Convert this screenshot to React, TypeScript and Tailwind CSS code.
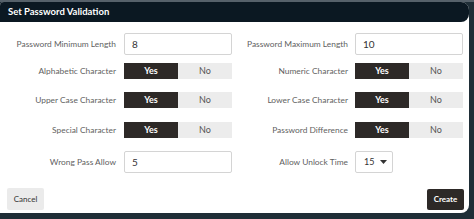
import React, { useState } from 'react';

type Toggle = 'yes' | 'no';

function YesNo({ value, onChange }: { value: Toggle; onChange: (v: Toggle) => void }) {
  return (
    <div className="flex h-[16px] w-[108px] text-[9px]">
      <button
        onClick={() => onChange('yes')}
        className={
          value === 'yes'
            ? 'flex-1 bg-[#2d2927] font-bold text-white'
            : 'flex-1 bg-[#ececec] text-[#555]'
        }
      >
        Yes
      </button>
      <button
        onClick={() => onChange('no')}
        className={
          value === 'no'
            ? 'flex-1 bg-[#2d2927] font-bold text-white'
            : 'flex-1 bg-[#ececec] text-[#555]'
        }
      >
        No
      </button>
    </div>
  );
}

function Label({ children }: { children: React.ReactNode }) {
  return <div className="w-[116px] shrink-0 text-right text-[8.4px] text-[#5f5f5f]">{children}</div>;
}

function TextBox({ value }: { value: string }) {
  return (
    <input
      defaultValue={value}
      className="h-[22px] w-[108px] rounded-[2px] border border-[#d4d4d4] bg-white px-[7px] text-[10px] text-[#333] outline-none"
    />
  );
}

export default function App() {
  const [toggles, setToggles] = useState<Record<string, Toggle>>({
    alpha: 'yes',
    numeric: 'yes',
    upper: 'yes',
    lower: 'yes',
    special: 'yes',
    diff: 'yes',
  });
  const set = (k: string) => (v: Toggle) => setToggles((p) => ({ ...p, [k]: v }));

  return (
    <div
      className="flex h-[219px] w-[474px] flex-col bg-[#1f2e37]"
      style={{ fontFamily: 'Lato, "Open Sans", sans-serif' }}
    >
      <div className="h-[2px] bg-[#56616a]" />
      <div className="flex h-[211px] w-[469px] flex-col overflow-hidden rounded-tl-[4px] rounded-r-[8px] bg-white">
        <div className="flex h-[20px] items-center rounded-br-[8px] bg-[#0b1822] px-[8px] text-[9.5px] font-bold text-white">
          Set Password Validation
        </div>

        <div className="mt-[11px] flex flex-col">
          <div className="flex h-[22px] items-center">
            <div className="flex w-[232px] items-center gap-[8px]">
              <Label>Password Minimum Length</Label>
              <TextBox value="8" />
            </div>
            <div className="flex items-center gap-[7px]">
              <Label>Password Maximum Length</Label>
              <TextBox value="10" />
            </div>
          </div>

          <div className="mt-[8px] flex h-[16px] items-center">
            <div className="flex w-[232px] items-center gap-[8px]">
              <Label>Alphabetic Character</Label>
              <YesNo value={toggles.alpha} onChange={set('alpha')} />
            </div>
            <div className="flex items-center gap-[7px]">
              <Label>Numeric Character</Label>
              <YesNo value={toggles.numeric} onChange={set('numeric')} />
            </div>
          </div>

          <div className="mt-[13px] flex h-[16px] items-center">
            <div className="flex w-[232px] items-center gap-[8px]">
              <Label>Upper Case Character</Label>
              <YesNo value={toggles.upper} onChange={set('upper')} />
            </div>
            <div className="flex items-center gap-[7px]">
              <Label>Lower Case Character</Label>
              <YesNo value={toggles.lower} onChange={set('lower')} />
            </div>
          </div>

          <div className="mt-[14px] flex h-[16px] items-center">
            <div className="flex w-[232px] items-center gap-[8px]">
              <Label>Special Character</Label>
              <YesNo value={toggles.special} onChange={set('special')} />
            </div>
            <div className="flex items-center gap-[7px]">
              <Label>Password Difference</Label>
              <YesNo value={toggles.diff} onChange={set('diff')} />
            </div>
          </div>

          <div className="mt-[13px] flex h-[22px] items-center">
            <div className="flex w-[232px] items-center gap-[8px]">
              <Label>Wrong Pass Allow</Label>
              <TextBox value="5" />
            </div>
            <div className="flex items-center gap-[7px]">
              <Label>Allow Unlock Time</Label>
              <div className="flex h-[22px] w-[38px] items-center gap-[6px] rounded-[2px] border border-[#d4d4d4] bg-white pl-[8px] text-[9px] text-[#333]">
                <span>15</span>
                <svg width="7" height="4" viewBox="0 0 7 4">
                  <path d="M0 0h7L3.5 4z" fill="#333" />
                </svg>
              </div>
            </div>
          </div>
        </div>

        <div className="mt-[15px] flex items-center justify-between pl-[7px] pr-[5px]">
          <button className="h-[22px] w-[37px] rounded-[2px] bg-[#ebebeb] text-[8px] text-[#333]">Cancel</button>
          <button className="h-[21px] w-[37px] rounded-[2px] bg-[#2d2927] text-[8px] font-bold text-white">Create</button>
        </div>
      </div>
    </div>
  );
}
